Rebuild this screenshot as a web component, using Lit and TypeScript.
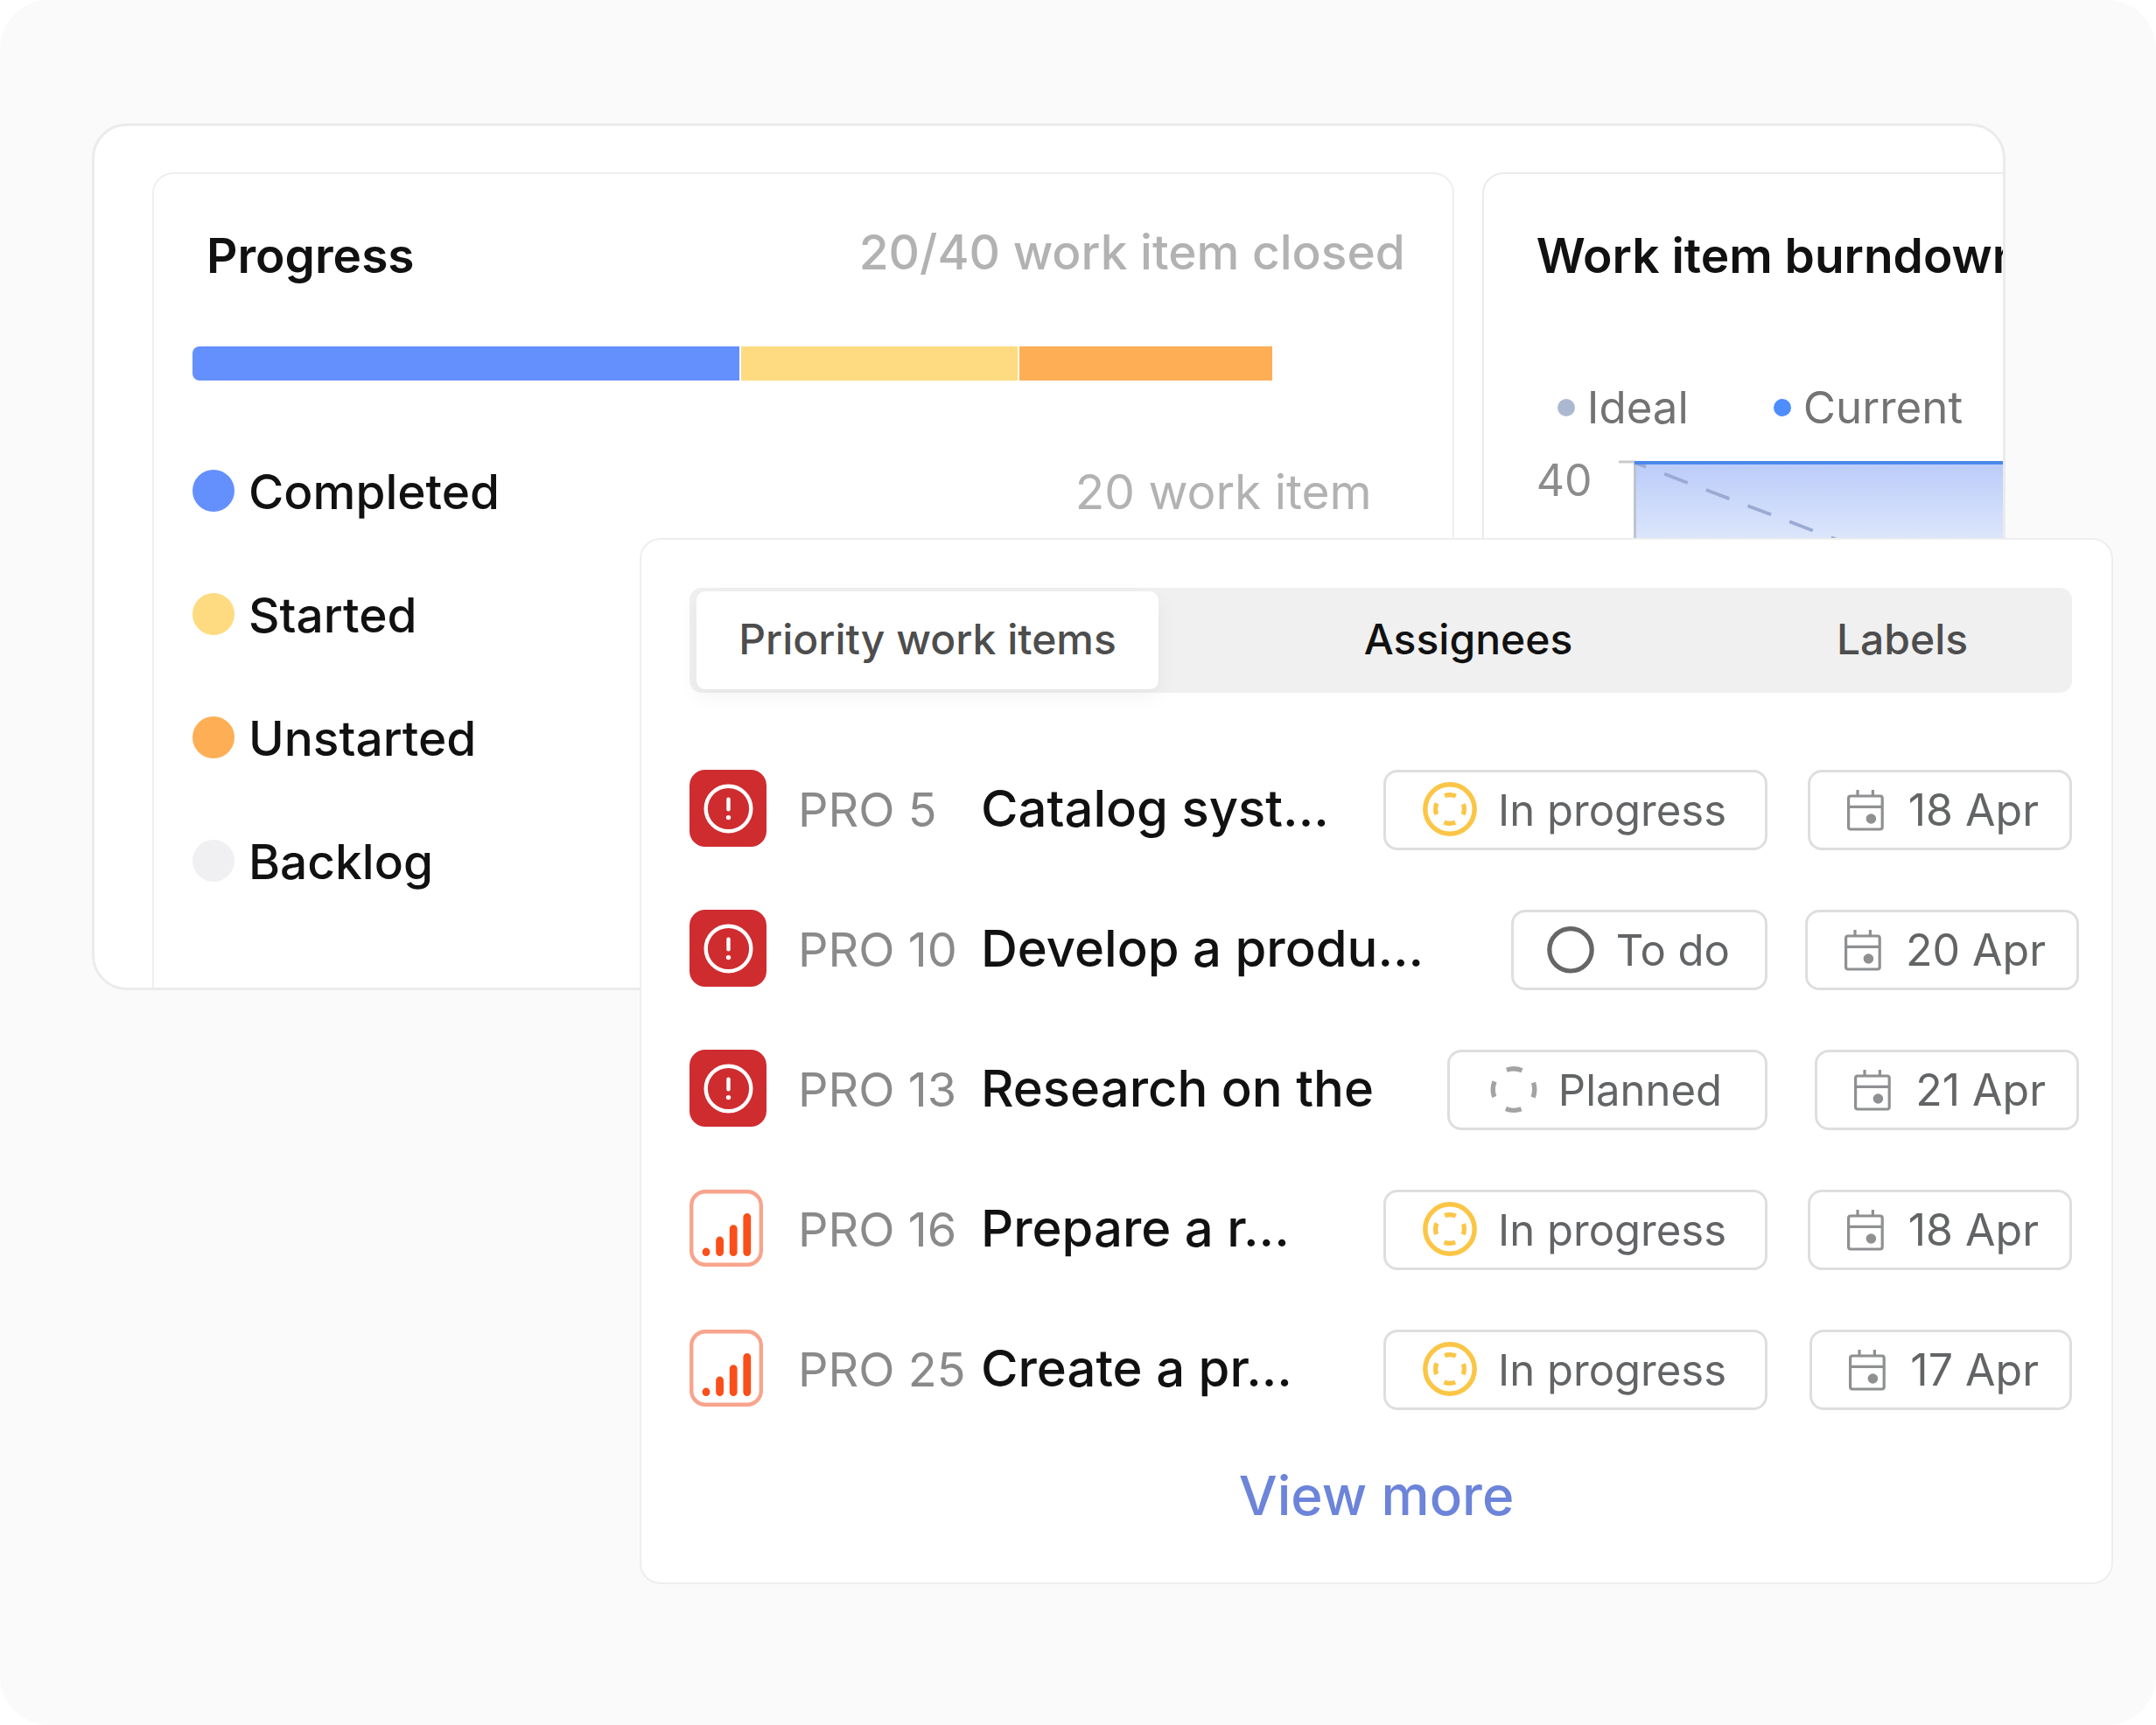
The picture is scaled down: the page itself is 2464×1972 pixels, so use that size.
import { LitElement, html, svg, css, nothing } from "lit";
import { customElement, property, state } from "lit/decorators.js";
import { classMap } from "lit/directives/class-map.js";
import { styleMap } from "lit/directives/style-map.js";

type Status = "progress" | "todo" | "planned";
type Priority = "urgent" | "high";

interface WorkItem {
  key: string;
  title: string;
  priority: Priority;
  status: Status;
  due: string;
  outset: boolean;
}

const STATUS_LABEL: Record<Status, string> = {
  progress: "In progress",
  todo: "To do",
  planned: "Planned",
};

const ITEMS: WorkItem[] = [
  { key: "PRO 5", title: "Catalog syst...", priority: "urgent", status: "progress", due: "18 Apr", outset: false },
  { key: "PRO 10", title: "Develop a produ...", priority: "urgent", status: "todo", due: "20 Apr", outset: true },
  { key: "PRO 13", title: "Research on the", priority: "urgent", status: "planned", due: "21 Apr", outset: true },
  { key: "PRO 16", title: "Prepare a r...", priority: "high", status: "progress", due: "18 Apr", outset: false },
  { key: "PRO 25", title: "Create a pr...", priority: "high", status: "progress", due: "17 Apr", outset: false },
];

const STATES = [
  { name: "Completed", tone: "blue", share: 46.4, note: "20 work item" },
  { name: "Started", tone: "yellow", share: 23.4, note: "" },
  { name: "Unstarted", tone: "orange", share: 21.5, note: "" },
  { name: "Backlog", tone: "grey", share: 0, note: "" },
];

const TABS = ["Priority work items", "Assignees", "Labels"];

const urgentIcon = html`<svg class="icon" width="88" height="88" viewBox="0 0 88 88" aria-hidden="true">
  <rect width="88" height="88" rx="18" fill="#cf2c30" />
  <circle cx="44.5" cy="44.5" r="25.8" fill="none" stroke="#fff" stroke-width="4.4" />
  <path d="M44.5 33.6v11.6" stroke="#fff" stroke-width="4.4" stroke-linecap="round" />
  <circle cx="44.5" cy="54.6" r="2.7" fill="#fff" />
</svg>`;

const highIcon = html`<svg class="icon" width="84" height="88" viewBox="0 0 84 88" aria-hidden="true">
  <rect x="2.2" y="2.2" width="79.6" height="83.6" rx="16" fill="#fff" stroke="#f8a48d" stroke-width="4.4" />
  <g stroke="#fa4f1a" stroke-width="8.8" stroke-linecap="round">
    <path d="M19 71v.6M34.6 58v13.6M50.2 44.6v27M65.8 31.4v40.2" />
  </g>
</svg>`;

const statusIcon: Record<Status, unknown> = {
  progress: html`<svg class="icon" width="62" height="62" viewBox="0 0 62 62" fill="none" stroke="#fbc546" aria-hidden="true">
    <circle cx="31" cy="30" r="28.2" stroke-width="5.4" />
    <circle cx="31" cy="30" r="16.4" stroke-width="5.2" stroke-dasharray="13 12.76" stroke-dashoffset="6.5" />
  </svg>`,
  todo: html`<svg class="icon" width="54" height="54" viewBox="0 0 54 54" fill="none" aria-hidden="true">
    <circle cx="27" cy="26.8" r="24.2" stroke="#666" stroke-width="5.2" />
  </svg>`,
  planned: html`<svg class="icon" width="54" height="54" viewBox="0 0 54 54" fill="none" aria-hidden="true">
    <circle cx="27" cy="26.6" r="23.8" stroke="#a3a3a3" stroke-width="5.4" stroke-dasharray="18 19.38" stroke-dashoffset="9" />
  </svg>`,
};

const calendarIcon = html`<svg class="icon" width="42" height="48" viewBox="0 0 42 48" fill="none" stroke="#8e9092" stroke-width="3.2" aria-hidden="true">
  <rect x="1.6" y="8" width="38.6" height="38" rx="2.5" />
  <path d="M1.6 20.4h38.6M12 1v7M29.4 1v7" />
  <circle cx="27.4" cy="34" r="5.8" fill="#8e9092" stroke="none" />
</svg>`;

const shared = css`
  :host {
    display: block;
    box-sizing: border-box;
  }
  *,
  *::before,
  *::after {
    box-sizing: border-box;
  }
  h2,
  p,
  ul {
    margin: 0;
    padding: 0;
  }
  ul {
    list-style: none;
  }
  button {
    margin: 0;
    padding: 0;
    border: 0;
    background: none;
    color: inherit;
    font: inherit;
    cursor: pointer;
  }
  .icon {
    display: block;
    flex: none;
    overflow: visible;
  }
`;

@customElement("progress-card")
export class ProgressCard extends LitElement {
  static styles = [
    shared,
    css`
      :host {
        border: 2px solid #efefef;
        border-bottom: 0;
        border-radius: 24px 24px 0 0;
        padding: 61px 0 113px;
      }
      .head {
        display: flex;
        justify-content: space-between;
        padding: 0 54px 0 60px;
        white-space: nowrap;
      }
      .heading {
        font-size: 55px;
        line-height: 64px;
        font-weight: 600;
      }
      .summary {
        font-size: 55px;
        line-height: 56px;
        font-weight: 500;
        color: #b2b2b2;
      }
      .track {
        display: flex;
        gap: 2px;
        height: 39px;
        margin: 72px 92px 0 44px;
        border-radius: 8px 0 0 8px;
        overflow: hidden;
      }
      .legend {
        display: flex;
        flex-direction: column;
        gap: 77px;
        margin: 94px 92px 0 44px;
      }
      .row {
        display: flex;
        align-items: center;
        gap: 16px;
        height: 64px;
        font-size: 55px;
        line-height: 64px;
        font-weight: 500;
      }
      .dot {
        width: 48px;
        height: 48px;
        border-radius: 50%;
      }
      .name,
      .note {
        padding-top: 2px;
      }
      .note {
        margin-left: auto;
        font-weight: 400;
        color: #b2b2b2;
      }
      .blue {
        background: #6490fe;
      }
      .yellow {
        background: #fedb80;
      }
      .orange {
        background: #feae55;
      }
      .grey {
        background: #f0f0f2;
      }
    `,
  ];

  render() {
    return html`
      <div class="head">
        <h2 class="heading">Progress</h2>
        <p class="summary">20/40 work item closed</p>
      </div>
      <div class="track">
        ${STATES.filter((s) => s.share > 0).map(
          (s) => html`<span class=${s.tone} style=${styleMap({ width: `${s.share}%` })}></span>`
        )}
      </div>
      <ul class="legend">
        ${STATES.map(
          (s) => html`<li class="row">
            <span class="dot ${s.tone}"></span>
            <span class="name">${s.name}</span>
            ${s.note ? html`<span class="note">${s.note}</span>` : nothing}
          </li>`
        )}
      </ul>
    `;
  }
}

@customElement("burndown-card")
export class BurndownCard extends LitElement {
  static styles = [
    shared,
    css`
      :host {
        border: 2px solid #ebebeb;
        border-right: 0;
        border-bottom: 0;
        border-radius: 24px 0 0 0;
        padding-top: 61px;
        overflow: hidden;
        white-space: nowrap;
      }
      .heading {
        padding-left: 60px;
        font-size: 55px;
        line-height: 64px;
        font-weight: 600;
      }
      .legend {
        display: flex;
        gap: 97px;
        margin-top: 112px;
        padding-left: 84px;
        font-size: 51px;
        line-height: 60px;
        color: #737373;
      }
      .series {
        display: flex;
        align-items: center;
        gap: 14px;
      }
      .dot {
        width: 20px;
        height: 20px;
        border-radius: 50%;
      }
      .ideal {
        background: #abb9d0;
      }
      .current {
        background: #4d8dfc;
      }
      .chart {
        display: grid;
        grid-template-columns: 94px minmax(0, 1fr);
        margin-top: 28px;
        padding-left: 60px;
      }
      .tick {
        font-size: 50px;
        line-height: 50px;
        color: #8c8c8c;
      }
      .plot {
        display: block;
        width: 100%;
        height: 360px;
      }
    `,
  ];

  render() {
    return html`
      <h2 class="heading">Work item burndown</h2>
      <ul class="legend">
        <li class="series"><span class="dot ideal"></span><span>Ideal</span></li>
        <li class="series"><span class="dot current"></span><span>Current</span></li>
      </ul>
      <div class="chart">
        <span class="tick">40</span>
        <svg class="plot" aria-hidden="true">
          <defs>
            <linearGradient id="fill" gradientUnits="userSpaceOnUse" x1="0" y1="4" x2="0" y2="360">
              <stop offset="0" stop-color="#bacbf9" />
              <stop offset="0.25" stop-color="#dce6fb" />
              <stop offset="1" stop-color="#ffffff" />
            </linearGradient>
          </defs>
          <rect x="18" y="4" width="100%" height="356" fill="url(#fill)" />
          <path d="M18.5 4v356" stroke="#bcc5cc" stroke-width="3" />
          <path d="M0 4h19" stroke="#cbcbcb" stroke-width="3" />
          ${svg`<path d="M18.5 5L850 322" stroke="#9aaad2" stroke-width="3.8" stroke-dasharray="28.5 22.5" stroke-dashoffset="15" />`}
          <rect x="18" y="3" width="100%" height="4" fill="#4b88ec" />
        </svg>
      </div>
    `;
  }
}

@customElement("work-item-row")
export class WorkItemRow extends LitElement {
  @property({ attribute: false }) item!: WorkItem;

  static styles = [
    shared,
    css`
      .item {
        display: grid;
        grid-template-columns: 124px 209px minmax(0, 1fr) auto 348px;
        align-items: start;
        white-space: nowrap;
      }
      .key {
        font-size: 54px;
        line-height: 91px;
        color: #8a8a8a;
      }
      .title {
        font-size: 58px;
        line-height: 88px;
        font-weight: 500;
      }
      .pill {
        display: flex;
        align-items: center;
        height: 92px;
        border: 3px solid #dedede;
        border-radius: 16px;
        background: #fff;
        font-size: 49px;
        color: #626466;
      }
      .progress {
        padding: 0 44px 0 42px;
        gap: 24px;
      }
      .todo {
        padding: 0 40px 0 38px;
        gap: 25px;
      }
      .planned {
        padding: 0 49px 0 46px;
        gap: 24px;
      }
      .due {
        justify-self: end;
        padding: 0 35px 0 42px;
        gap: 28px;
        font-size: 50px;
      }
      .outset {
        margin-right: -8px;
      }
    `,
  ];

  render() {
    const { key, title, priority, status, due, outset } = this.item;
    return html`<div class="item">
      ${priority === "urgent" ? urgentIcon : highIcon}
      <span class="key">${key}</span>
      <span class="title">${title}</span>
      <button class="pill ${status}" type="button">${statusIcon[status]}<span>${STATUS_LABEL[status]}</span></button>
      <button class=${classMap({ pill: true, due: true, outset })} type="button">${calendarIcon}<span>${due}</span></button>
    </div>`;
  }
}

@customElement("work-items-panel")
export class WorkItemsPanel extends LitElement {
  @state() private active = 0;

  static styles = [
    shared,
    css`
      :host {
        border: 2px solid #eeeeee;
        border-radius: 24px;
        background: #fff;
        padding: 55px 0 63px;
      }
      .tabs {
        display: grid;
        grid-template-columns: 528fr 708fr 284fr;
        height: 120px;
        margin: 0 45px 0 55px;
        padding: 4px 52px 4px 8px;
        border-radius: 14px;
        background: #f0f0f0;
        font-size: 48px;
        font-weight: 500;
        white-space: nowrap;
      }
      .tab {
        padding-bottom: 4px;
        border-radius: 10px;
        color: #4d4d4d;
      }
      .strong {
        color: #111;
      }
      .active {
        background: #fff;
        box-shadow: 0 8px 24px rgba(0, 0, 0, 0.05);
      }
      .items {
        display: flex;
        flex-direction: column;
        gap: 68px;
        margin: 88px 45px 0 55px;
      }
      .more {
        display: block;
        width: fit-content;
        margin: 62px auto 0;
        font-size: 62px;
        line-height: 72px;
        font-weight: 500;
        color: #6c84d9;
        text-decoration: none;
      }
    `,
  ];

  render() {
    return html`
      <div class="tabs" role="tablist">
        ${TABS.map(
          (label, i) => html`<button
            type="button"
            role="tab"
            aria-selected=${this.active === i ? "true" : "false"}
            class=${classMap({ tab: true, strong: i === 1, active: this.active === i })}
            @click=${() => (this.active = i)}
          >${label}</button>`
        )}
      </div>
      <ul class="items">
        ${ITEMS.map((item) => html`<li><work-item-row .item=${item}></work-item-row></li>`)}
      </ul>
      <a class="more" href="#">View more</a>
    `;
  }
}

@customElement("app-root")
export class AppRoot extends LitElement {
  static styles = [
    shared,
    css`
      :host {
        background: #fff;
        color: #111;
        font-family: Inter, "Liberation Sans", sans-serif;
      }
      .page {
        display: grid;
        grid-template-columns: minmax(0, 1fr);
        align-items: start;
        min-height: 100vh;
        padding: 141px 49px 161px 105px;
        border-radius: 56px;
        background: #fafafa;
      }
      .back,
      .front {
        grid-area: 1 / 1;
      }
      .back {
        display: grid;
        grid-template-columns: minmax(0, 1487fr) minmax(0, 595fr);
        gap: 32px;
        margin-right: 123px;
        padding: 53px 0 0 66px;
        border: 3px solid #ebebeb;
        border-radius: 40px;
        background: #fff;
        overflow: hidden;
      }
      .front {
        margin: 474px 0 0 626px;
      }
    `,
  ];

  render() {
    return html`<main class="page">
      <section class="back">
        <progress-card></progress-card>
        <burndown-card></burndown-card>
      </section>
      <work-items-panel class="front"></work-items-panel>
    </main>`;
  }
}
